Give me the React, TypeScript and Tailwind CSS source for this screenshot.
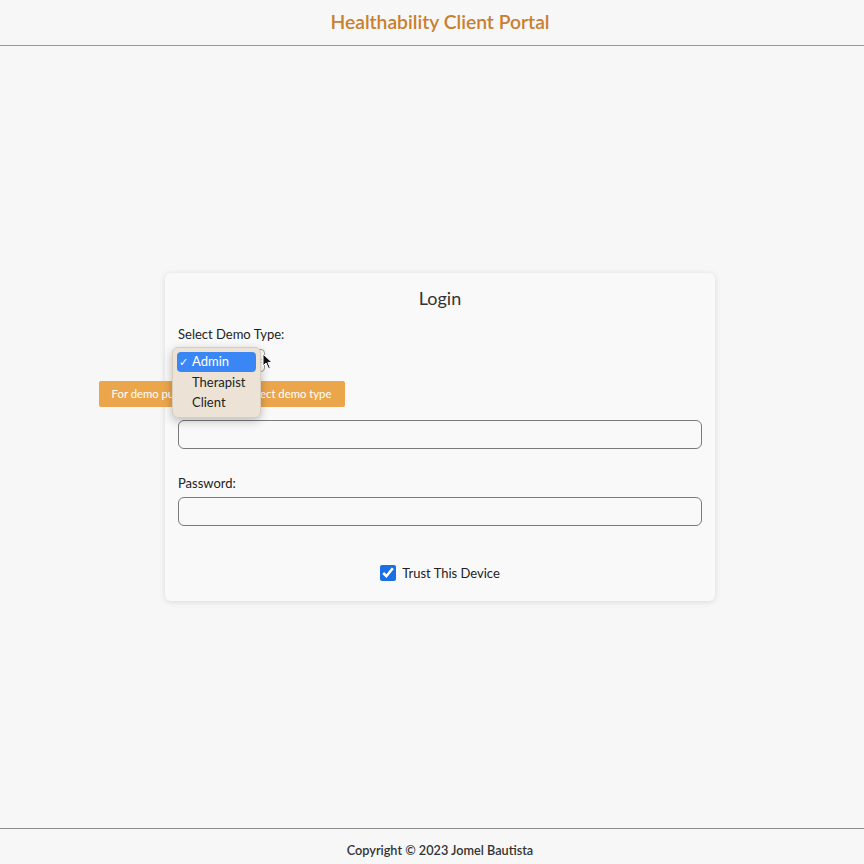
import React from "react";

export default function App() {
  const font = { fontFamily: "Lato, 'Noto Sans', sans-serif" };
  return (
    <div style={font} className="flex h-[864px] w-full flex-col bg-[#f7f7f7] text-[#222]">
      <header className="flex h-[46px] items-center justify-center border-b-[1.5px] border-[#9a9a9a] pl-[16px]">
        <h1 className="text-[19.3px] font-semibold text-[#c97f2f]">Healthability Client Portal</h1>
      </header>

      <main className="flex flex-1 items-center justify-center pl-[16px]">
        <div className="w-[550px] rounded-md bg-[#f9f9f9] px-[13px] pb-[20px] pt-[12px] shadow-[0_1px_6px_rgba(0,0,0,0.12)]">
          <h2 className="text-center text-[18px] leading-[26px] text-[#333]">Login</h2>

          <label className="mt-[14px] block text-[13px] leading-[18px] text-[#222]">Select Demo Type:</label>
          <div className="relative mt-[6px] h-[23px] w-[87px]">
            <div className="flex h-[23px] w-[87px] items-center justify-end rounded-[4px] border border-[#9a9a9a] bg-white pr-[2px]">
              <svg width="6" height="10" viewBox="0 0 6 10">
                <path d="M1 3.5 L3 1.5 L5 3.5 M1 6.5 L3 8.5 L5 6.5" stroke="#444" strokeWidth="1" fill="none" />
              </svg>
            </div>

            <div className="absolute left-1/2 top-[32px] flex h-[26px] w-[246px] -translate-x-1/2 items-center justify-center rounded-[2px] bg-[#eba64c] text-[11.3px] text-white">
              For demo purposes, please select demo type
            </div>

            <div className="absolute left-[-6px] top-[-2px] z-10 w-[89px] rounded-[6px] border border-[#d6cdbf] bg-[#ece3d6] p-[4px] shadow-[0_3px_10px_rgba(0,0,0,0.25)]">
              <div className="flex h-[20px] items-center rounded-[4px] bg-[#3b86f5] pl-[2px] text-[13px] text-white">
                <span className="w-[13px] text-[11px]">✓</span>Admin
              </div>
              <div className="flex h-[21px] items-center pl-[15px] text-[13px] text-[#222]">Therapist</div>
              <div className="flex h-[20px] items-center pl-[15px] text-[13px] text-[#222]">Client</div>
            </div>

            <svg className="absolute left-[84px] top-[4px] z-20" width="11" height="17" viewBox="0 0 11 17">
              <path d="M1 1 L1 13 L4 10 L6.5 15.5 L8.3 14.7 L5.9 9.4 L10 9.4 Z" fill="#111" stroke="#fff" strokeWidth="1" />
            </svg>
          </div>

          <label className="mt-[25px] block text-[13px] leading-[18px] text-[#222]">Email:</label>
          <input className="mt-[5px] block h-[29px] w-full rounded-[6px] border border-[#7a7a7a] bg-[#f9f9f9] px-2 outline-none" />

          <label className="mt-[25px] block text-[13px] leading-[18px] text-[#222]">Password:</label>
          <input type="password" className="mt-[5px] block h-[29px] w-full rounded-[6px] border border-[#7a7a7a] bg-[#f9f9f9] px-2 outline-none" />

          <div className="mt-[39px] flex items-center justify-center gap-[6px]">
            <input type="checkbox" defaultChecked className="m-0 h-[16px] w-[16px] accent-[#1a6fe6]" />
            <span className="text-[13px] leading-[16px] text-[#222]">Trust This Device</span>
          </div>
        </div>
      </main>

      <footer className="flex h-[36px] items-start justify-center border-t-[1.5px] border-[#8a8a8a] pl-[16px] pt-[13px]">
        <p className="text-[12.7px] leading-[16px] font-semibold text-[#333]">Copyright © 2023 Jomel Bautista</p>
      </footer>
    </div>
  );
}
